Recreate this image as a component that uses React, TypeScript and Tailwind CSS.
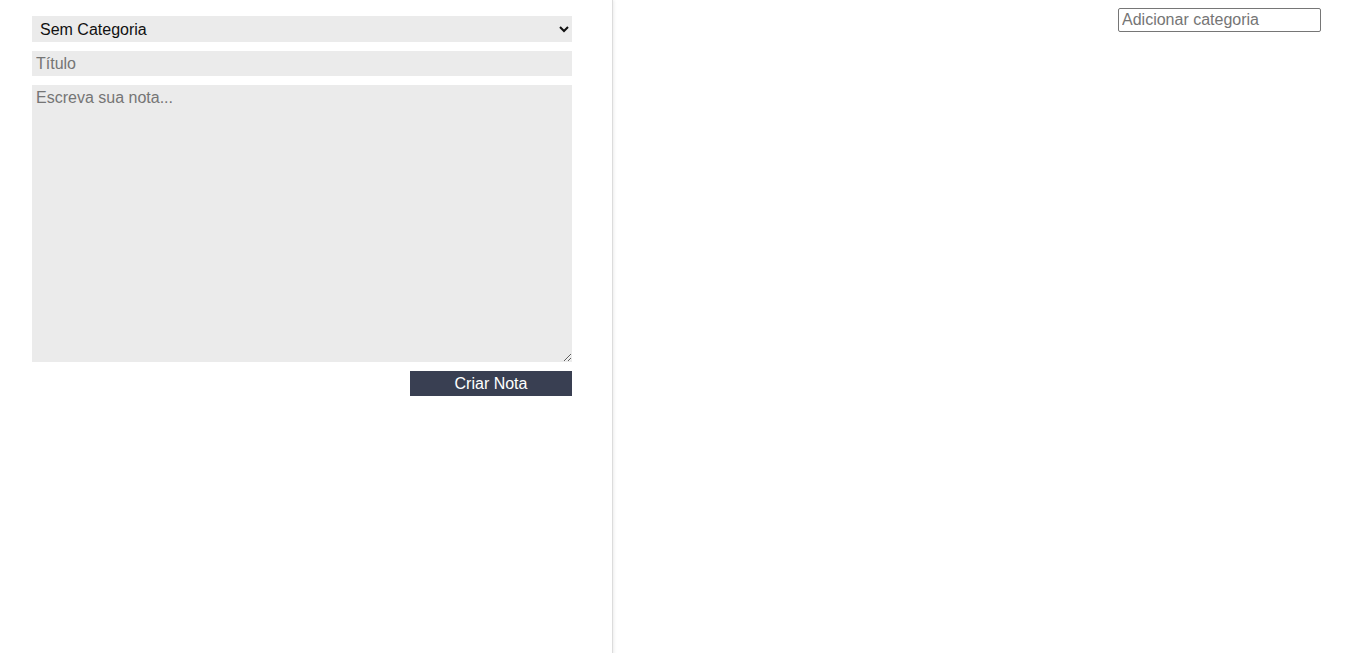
export default function App() {
  return (
    <div className="flex min-h-[682px] bg-white font-['Liberation_Sans',Arial,sans-serif] text-base text-black">
      <aside className="flex w-[613px] shrink-0 flex-col border-r border-[#dcdcdc] pl-8 pr-10 pt-4 shadow-[1px_0_3px_rgba(0,0,0,0.08)]">
        <select className="h-[26px] w-full border-0 bg-[#ebebeb] pl-1 pr-[6px] text-base text-[#111] outline-none">
          <option>Sem Categoria</option>
        </select>
        <input
          type="text"
          placeholder="Título"
          className="mt-[9px] h-[25px] w-full border-0 bg-[#ebebeb] px-1 text-base outline-none placeholder:text-[#757575]"
        />
        <textarea
          placeholder="Escreva sua nota..."
          className="mt-[9px] h-[277px] w-full border-0 bg-[#ebebeb] px-1 pt-[1px] text-base outline-none placeholder:text-[#757575]"
        />
        <div className="mt-[9px] flex justify-end">
          <button className="h-[25px] w-[162px] bg-[#393f52] text-base text-white">Criar Nota</button>
        </div>
      </aside>
      <main className="flex flex-1 justify-end pr-8 pt-2">
        <input
          type="text"
          placeholder="Adicionar categoria"
          className="h-6 w-[203px] rounded-[2px] border border-[#767676] px-[3px] text-base outline-none placeholder:text-[#757575]"
        />
      </main>
    </div>
  );
}
